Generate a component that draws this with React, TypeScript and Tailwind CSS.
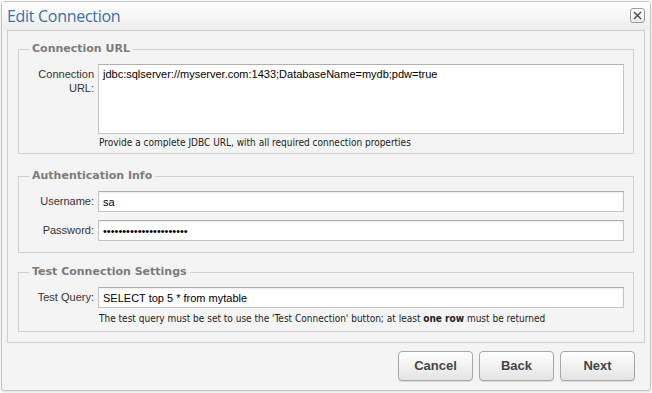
import React from "react";

function Field({ label, children }: { label: React.ReactNode; children: React.ReactNode }) {
  return (
    <div className="flex items-start">
      <div className="w-[79px] shrink-0 pr-[4px] text-right text-[11px] leading-[14px] text-[#333] pt-[3px]">{label}</div>
      <div className="flex-1">{children}</div>
    </div>
  );
}

function Group({ title, children, className }: { title: string; children: React.ReactNode; className?: string }) {
  return (
    <fieldset className={"border border-[#d2d2d2] pl-0 pr-[9px] " + (className ?? "")}>
      <legend className="ml-[10px] px-[3px] text-[11px] font-bold leading-[14px] text-[#7c7c7c] font-['DejaVu_Sans',sans-serif]">
        {title}
      </legend>
      {children}
    </fieldset>
  );
}

const inputCls =
  "block w-full h-[21px] border border-[#c4c4c4] border-t-[#b0b0b0] bg-white px-[4px] text-[11px] text-black outline-none shadow-[inset_0_1px_2px_rgba(0,0,0,0.08)]";

const helpCls = "pl-[1px] text-[10px] leading-[13px] text-[#222] font-['DejaVu_Sans_Condensed','DejaVu_Sans',sans-serif]";

const btnCls =
  "w-[75px] h-[30px] rounded-[4px] border border-[#a8a8a8] bg-gradient-to-b from-white to-[#e4e4e4] text-[13px] font-bold text-[#454545] shadow-[0_1px_1px_rgba(0,0,0,0.1)]";

export default function App() {
  return (
    <div className="w-[652px] h-[393px] bg-white pl-[1px] pt-[1px] font-['Liberation_Sans',Arial,sans-serif]">
      <div className="w-[650px] h-[390px] flex flex-col border border-[#c6c6c6] rounded-[3px] bg-[#f4f4f4] shadow-[0_1px_3px_rgba(0,0,0,0.15)]">
        <div className="h-[28px] shrink-0 flex items-center justify-between pl-[5px] pr-[5px] bg-gradient-to-b from-white to-[#ededed]">
          <span className="text-[16px] leading-[20px] text-[#3a70a8] font-['Open_Sans',sans-serif] tracking-[-0.3px]">Edit Connection</span>
          <button className="w-[15px] h-[15px] mt-[-2px] flex items-center justify-center rounded-[3px] border border-[#9a9a9a] bg-gradient-to-b from-white to-[#ececec]">
            <svg width="9" height="9" viewBox="0 0 9 9">
              <path d="M1 1L8 8M8 1L1 8" stroke="#444" strokeWidth="1.4" />
            </svg>
          </button>
        </div>
        <div className="mx-[5px] h-[313px] shrink-0 border border-[#d0d0d0] bg-[#f4f4f4] px-[10px] pt-[11px] flex flex-col">
          <Group title="Connection URL" className="pb-[4px]">
            <div className="mt-[8px]">
              <Field label={<>Connection<br />URL:</>}>
                <textarea
                  className="block w-full h-[70px] resize-none border border-[#c4c4c4] border-t-[#b0b0b0] bg-white px-[4px] py-[2px] text-[11px] leading-[14px] text-black outline-none"
                  defaultValue="jdbc:sqlserver://myserver.com:1433;DatabaseName=mydb;pdw=true"
                />
                <div className={"mt-[2px] " + helpCls}>
                  Provide a complete JDBC URL, with all required connection properties
                </div>
              </Field>
            </div>
          </Group>
          <Group title="Authentication Info" className="mt-[15px] pb-[11px]">
            <div className="mt-[8px] flex flex-col gap-[8px]">
              <Field label="Username:">
                <input className={inputCls} defaultValue="sa" />
              </Field>
              <Field label="Password:">
                <input className={inputCls} type="password" defaultValue="••••••••••••••••••••••" />
              </Field>
            </div>
          </Group>
          <Group title="Test Connection Settings" className="mt-[12px] pb-[6px]">
            <div className="mt-[8px]">
              <Field label="Test Query:">
                <input className={inputCls} defaultValue="SELECT top 5 * from mytable" />
                <div className={"mt-[4px] " + helpCls}>
                  The test query must be set to use the 'Test Connection' button; at least <b>one row</b> must be returned
                </div>
              </Field>
            </div>
          </Group>
        </div>
        <div className="flex justify-end gap-[6px] pr-[15px] pt-[8px]">
          <button className={btnCls}>Cancel</button>
          <button className={btnCls}>Back</button>
          <button className={btnCls}>Next</button>
        </div>
      </div>
    </div>
  );
}
